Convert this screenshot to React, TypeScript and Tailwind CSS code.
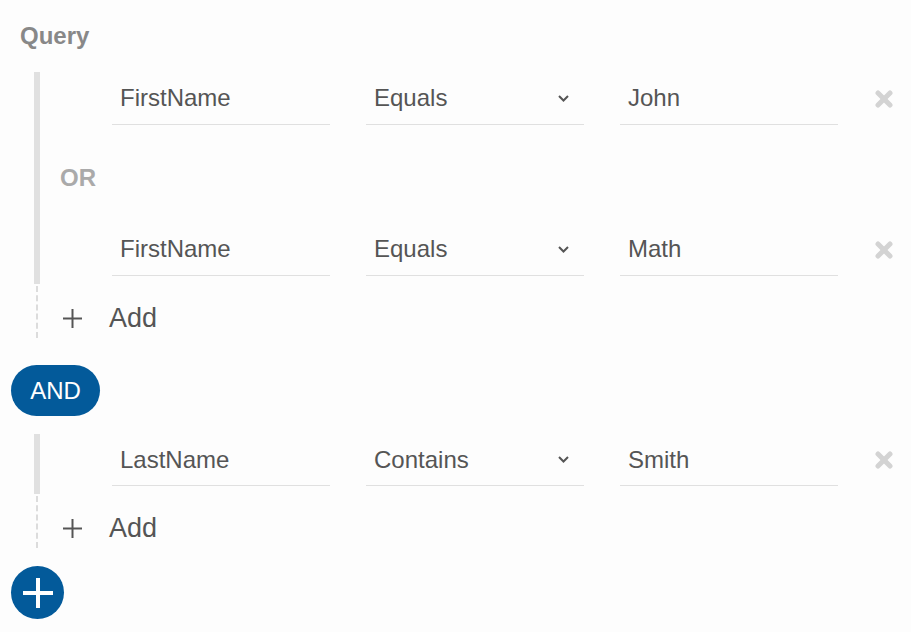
const BLUE = "bg-[#035a9a]";

type Rule = { field: string; op: string; value: string };

function Chevron() {
  return (
    <svg width="11" height="7" viewBox="0 0 11 7" fill="none">
      <polyline points="1,1 5.5,5.5 10,1" stroke="#555" strokeWidth="2" />
    </svg>
  );
}

function RemoveIcon() {
  return (
    <svg width="20" height="18" viewBox="0 0 20 18">
      <g stroke="#d3d3d3" strokeWidth="5" strokeLinecap="round">
        <line x1="4" y1="3" x2="16" y2="15" />
        <line x1="16" y1="3" x2="4" y2="15" />
      </g>
    </svg>
  );
}

function RuleRow({ rule, h }: { rule: Rule; h: string }) {
  return (
    <div className="flex items-center gap-[36px] pl-[72px]">
      <div className={`${h} w-[218px] flex items-center pl-2 border-b border-[#e0e0e0]`}>
        {rule.field}
      </div>
      <div className={`${h} w-[218px] flex items-center justify-between pl-2 pr-[15px] border-b border-[#e0e0e0]`}>
        <span>{rule.op}</span>
        <Chevron />
      </div>
      <div className={`${h} w-[218px] flex items-center pl-2 border-b border-[#e0e0e0]`}>
        {rule.value}
      </div>
      <RemoveIcon />
    </div>
  );
}

function AddRow() {
  return (
    <div className="flex h-[56px]">
      <div className="ml-[2px] mt-[2px] h-[52px] border-l-2 border-dashed border-[#dcdcdc]" />
      <div className="flex items-center pt-3 ml-[25px] gap-[27px]">
        <svg width="19" height="19" viewBox="0 0 19 19">
          <g stroke="#555" strokeWidth="2">
            <line x1="0" y1="9.5" x2="19" y2="9.5" />
            <line x1="9.5" y1="0" x2="9.5" y2="19" />
          </g>
        </svg>
        <span className="text-[27px]">Add</span>
      </div>
    </div>
  );
}

export default function App() {
  return (
    <div
      className="w-[911px] h-[632px] bg-[#fdfdfd] pl-[11px] text-[24px] text-[#555] overflow-hidden"
      style={{ fontFamily: '"Liberation Sans", Arial, sans-serif' }}
    >
      <div className="pt-[22px] ml-[9px] h-[50px] leading-[28px] font-bold text-[#888]">Query</div>

      {/* first group */}
      <div className="ml-[23px] mt-[22px]">
        <div className="border-l-[6px] border-[#e0e0e0] pb-[8px]">
          <RuleRow rule={{ field: "FirstName", op: "Equals", value: "John" }} h="h-[53px]" />
          <div className="h-[98px] flex items-center pt-2 pl-[20px] font-bold text-[#aaa]">OR</div>
          <RuleRow rule={{ field: "FirstName", op: "Equals", value: "Math" }} h="h-[53px]" />
        </div>
        <AddRow />
      </div>

      <div className={`mt-[25px] w-[89px] h-[51px] rounded-full ${BLUE} text-white flex items-center justify-center`}>
        AND
      </div>

      {/* second group */}
      <div className="ml-[23px] mt-[18px]">
        <div className="border-l-[6px] border-[#e0e0e0] pb-[8px]">
          <RuleRow rule={{ field: "LastName", op: "Contains", value: "Smith" }} h="h-[52px]" />
        </div>
        <AddRow />
      </div>

      <div className={`mt-[16px] w-[53px] h-[53px] rounded-full ${BLUE} flex items-center justify-center`}>
        <svg width="30" height="30" viewBox="0 0 30 30">
          <g stroke="#fff" strokeWidth="4">
            <line x1="0" y1="15" x2="30" y2="15" />
            <line x1="15" y1="0" x2="15" y2="30" />
          </g>
        </svg>
      </div>
    </div>
  );
}
